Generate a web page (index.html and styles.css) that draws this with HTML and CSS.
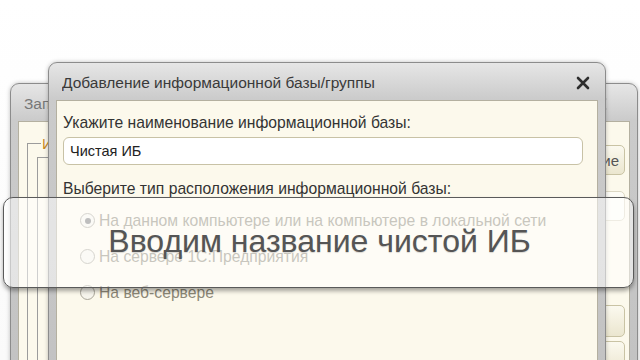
FILE: index.html
```html
<!DOCTYPE html>
<html lang="ru">
  <head>
    <meta charset="UTF-8" />
    <title>Добавление информационной базы</title>
    <link rel="stylesheet" href="styles.css">
  </head>
  <body>
    <div class="desktop">
      <div class="window back">
        <div class="titlebar">
          <span class="title">Запуск 1С:Предприятия</span>
          <svg class="close" width="14" height="14" viewBox="0 0 14 14"><path d="M2 2 L12 12 M12 2 L2 12" /></svg>
        </div>
        <div class="body">
          <div class="group">
            <span class="group-label">И</span>
            <div class="inner-box"></div>
          </div>
          <div class="side-buttons">
            <div class="btn">ие</div>
            <div class="btn field"></div>
            <div class="spacer"></div>
            <div class="btn small"></div>
            <div class="btn small"></div>
          </div>
        </div>
      </div>

      <div class="window front">
        <div class="titlebar">
          <span class="title">Добавление информационной базы/группы</span>
          <svg class="close" width="14" height="14" viewBox="0 0 14 14"><path d="M2 2 L12 12 M12 2 L2 12" /></svg>
        </div>
        <div class="body">
          <div class="label">Укажите наименование информационной базы:</div>
          <div class="input">Чистая ИБ</div>
          <div class="label second">Выберите тип расположения информационной базы:</div>
          <div class="radios">
            <div class="radio checked"><span class="dot"></span>На данном компьютере или на компьютере в локальной сети</div>
            <div class="radio"><span class="dot"></span>На сервере 1С:Предприятия</div>
            <div class="radio"><span class="dot"></span>На веб-сервере</div>
          </div>
        </div>
      </div>

      <div class="banner">Вводим название чистой ИБ</div>
    </div>
  </body>
</html>
```

FILE: styles.css
```css
* {
  margin: 0;
  padding: 0;
  box-sizing: border-box;
}

body {
  font-family: "Liberation Sans", Arial, sans-serif;
  background: #fff;
  color: #333;
}

.desktop {
  position: relative;
  width: 640px;
  height: 360px;
  overflow: hidden;
  background: linear-gradient(#fff, #fafafa);
}

/* windows */

.window {
  position: absolute;
  display: flex;
  flex-direction: column;
  border: 1px solid #8c8c8c;
  border-radius: 9px 9px 0 0;
  background: linear-gradient(#e6e6e6 0, #cbcbcb 36px, #c2c2c2 100%);
  padding: 0 7px;
  box-shadow: 0 0 4px rgba(0, 0, 0, 0.25);
}

.window.back {
  left: 10px;
  top: 83px;
  width: 628px;
  height: 300px;
}

.window.front {
  left: 48px;
  top: 62px;
  width: 558px;
  height: 320px;
}

.titlebar {
  height: 37px;
  flex: none;
  display: flex;
  align-items: center;
  justify-content: space-between;
  padding: 2px 8px 0 6px;
}

.title {
  font-size: 15.5px;
  color: #3a3a3a;
  white-space: nowrap;
  overflow: hidden;
}

.close path {
  stroke: #2e2e2e;
  stroke-width: 2.6;
  stroke-linecap: round;
  fill: none;
}

.back .title {
  color: #777;
}

.back .close path {
  stroke: #6a6a6a;
}

.back .titlebar {
  padding-right: 23px;
}

.body {
  flex: 1;
  background: #fcf9ec;
  border: 1px solid #b4b0a0;
  border-bottom: none;
}

/* back window body */

.back .body {
  display: flex;
  justify-content: space-between;
  padding: 21px 4px 0 8px;
}

.group {
  position: relative;
  width: 40px;
  border-left: 1px solid #9c9c9c;
  border-top: 1px solid #9c9c9c;
  padding: 13px 0 0 9px;
}

.group-label {
  position: absolute;
  left: 13px;
  top: -9px;
  font-size: 15px;
  color: #c98a1e;
  background: #fcf9ec;
  padding: 0 1px;
}

.inner-box {
  height: 260px;
  border-left: 1px solid #9c9c9c;
  border-top: 1px solid #9c9c9c;
}

.side-buttons {
  width: 100px;
  display: flex;
  flex-direction: column;
  gap: 16px;
  padding-top: 2px;
}

.btn {
  height: 30px;
  border: 1px solid #c9c3a4;
  border-radius: 5px;
  background: linear-gradient(#fbf9ef, #ebe6cf);
  font-size: 15px;
  color: #555;
  display: flex;
  align-items: center;
  justify-content: flex-end;
  padding-right: 5px;
}

.btn.field {
  background: #fdfcf6;
  border-color: #ddd8c4;
}

.spacer {
  height: 64px;
}

.btn.small {
  margin-top: -12px;
  height: 32px;
}

/* front window body */

.front .body {
  padding: 13px 14px 0 6px;
  display: flex;
  flex-direction: column;
}

.label {
  font-size: 15.7px;
  line-height: 18px;
  color: #333;
  white-space: nowrap;
}

.input {
  margin-top: 5px;
  height: 28px;
  background: #fff;
  border: 1px solid #c8c2a6;
  border-radius: 6px;
  font-size: 14.5px;
  color: #222;
  padding: 5px 6px;
}

.label.second {
  margin-top: 15px;
}

.radios {
  display: flex;
  flex-direction: column;
  gap: 19px;
  margin-top: 14px;
  padding-left: 17px;
}

.radio {
  display: flex;
  align-items: center;
  gap: 4px;
  font-size: 15.7px;
  line-height: 17px;
  color: #8d8877;
  white-space: nowrap;
}

.dot {
  width: 15px;
  height: 15px;
  border-radius: 50%;
  border: 1px solid #aaa69a;
  background: #f6f4ec;
  display: flex;
  align-items: center;
  justify-content: center;
}

.radio.checked .dot::after {
  content: "";
  width: 6px;
  height: 6px;
  border-radius: 50%;
  background: #777;
}

/* caption banner */

.banner {
  position: absolute;
  left: 3px;
  top: 197px;
  width: 631px;
  height: 91px;
  border: 1.5px solid #5a5a5a;
  border-radius: 10px;
  background: rgba(255, 255, 255, 0.52);
  box-shadow: 0 3px 4px rgba(0, 0, 0, 0.35);
  display: flex;
  align-items: center;
  justify-content: center;
  padding: 0 0 2px 2px;
  font-size: 32px;
  color: #555;
  text-shadow: 0 1px 1px rgba(0, 0, 0, 0.15);
}
```
